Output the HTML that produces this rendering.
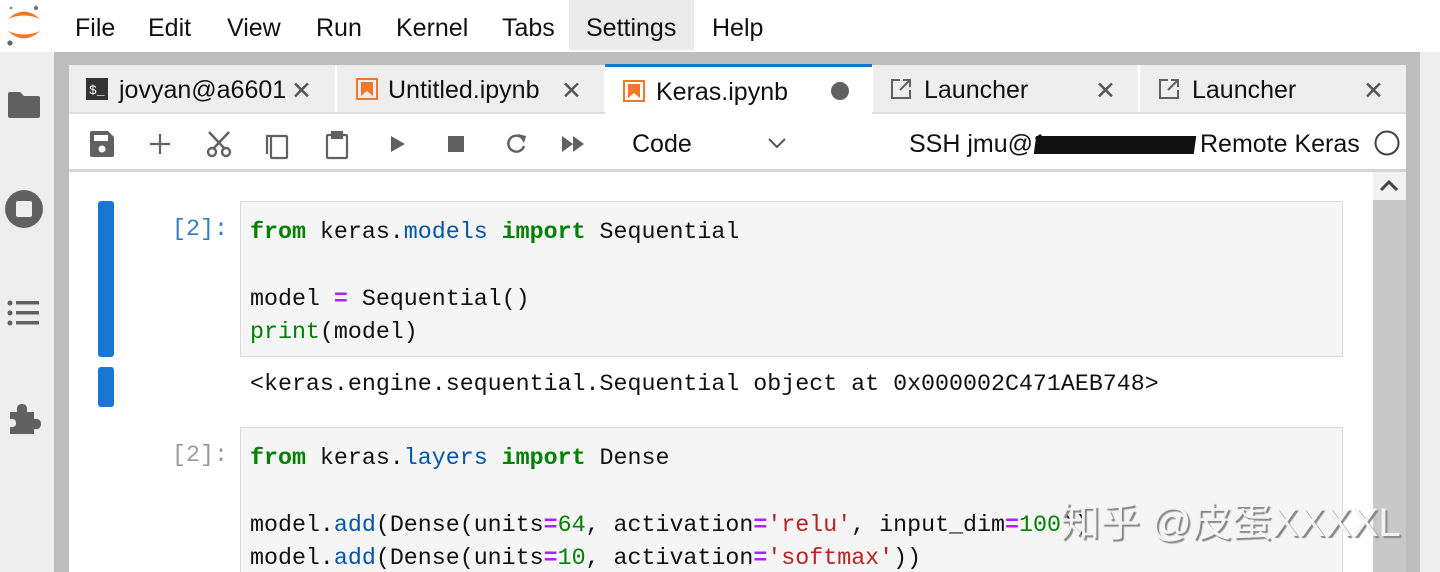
<!DOCTYPE html>
<html style="width:1440px;height:572px;overflow:hidden"><head><meta charset="utf-8"><style>
*{margin:0;padding:0;box-sizing:border-box}
body{width:1440px;height:572px;overflow:hidden;background:#bdbdbd;font-family:"Liberation Sans","Noto Sans CJK SC",sans-serif;position:relative}
.a{position:absolute}
.menu{left:0;top:0;width:1440px;height:52px;background:#fff}
.mi{top:14px;font-size:25px;color:#111}
.tab{top:65px;height:47px;background:#eee;font-size:25px;color:#111}
.tab span{position:absolute;top:11px}
.mono{font-family:"Liberation Mono","DejaVu Sans Mono",monospace;font-size:23.3px;white-space:pre;color:#111}
.k{color:#008000;font-weight:bold}.b{color:#0055aa}.p{color:#aa22ff;font-weight:bold}.g{color:#008000}.s{color:#ba2121}.n{color:#008000}
.ico{fill:#616161}
</style></head><body>
<div class="a menu"></div>
<div class="a" style="left:569px;top:0;width:125px;height:50px;background:#ebebeb"></div>
<svg class="a" style="left:4px;top:2px" width="40" height="46" viewBox="0 0 40 46">
<path d="M4 17 Q20 2 36 17 Q20 10 4 17Z" fill="#f37726"/>
<path d="M4 29 Q20 44 36 29 Q20 36 4 29Z" fill="#f37726"/>
<circle cx="32" cy="6" r="2.2" fill="#777"/><circle cx="6" cy="41" r="2.6" fill="#666"/><circle cx="7" cy="6" r="1.4" fill="#888"/>
</svg>
<div class="a mi" style="left:75px">File</div>
<div class="a mi" style="left:148px">Edit</div>
<div class="a mi" style="left:227px">View</div>
<div class="a mi" style="left:316px">Run</div>
<div class="a mi" style="left:396px">Kernel</div>
<div class="a mi" style="left:502px">Tabs</div>
<div class="a mi" style="left:586px">Settings</div>
<div class="a mi" style="left:712px">Help</div>

<div class="a" style="left:0;top:52px;width:54px;height:520px;background:#eee"></div>
<div class="a" style="left:1420px;top:52px;width:20px;height:520px;background:#eee"></div>
<svg class="a" style="left:6px;top:90px" width="36" height="30"><path class="ico" d="M2 4 Q2 2 4 2 H14 L18 6 H32 Q34 6 34 8 V26 Q34 28 32 28 H4 Q2 28 2 26Z"/></svg>
<svg class="a" style="left:4px;top:189px" width="40" height="40"><circle cx="20" cy="20" r="19" fill="#616161"/><rect x="12" y="12" width="16" height="16" rx="2" fill="#eee"/></svg>
<svg class="a" style="left:6px;top:298px" width="36" height="30"><g fill="#616161"><circle cx="4" cy="5" r="2.5"/><circle cx="4" cy="15" r="2.5"/><circle cx="4" cy="25" r="2.5"/><rect x="10" y="3" width="23" height="3.5"/><rect x="10" y="13" width="23" height="3.5"/><rect x="10" y="23" width="23" height="3.5"/></g></svg>
<svg class="a" style="left:6px;top:400px" width="36" height="36"><path class="ico" d="M4 12 H11 Q10 4 16 4 Q22 4 21 12 H28 V19 Q35 18 35 24 Q35 30 28 29 V34 H4 V27 Q10 28 10 23 Q10 18 4 19Z"/></svg>

<div class="a" style="left:69px;top:65px;width:1337px;height:507px;background:#fff"></div>
<div class="a tab" style="left:69px;width:266px"><svg class="a" style="left:17px;top:13px" width="22" height="22"><rect width="22" height="22" fill="#333"/><text x="3" y="16" font-size="13" fill="#fff" font-family="Liberation Mono">$_</text></svg><span style="left:50px">jovyan@a6601</span><span style="left:222px;color:#555">✕</span></div>
<div class="a tab" style="left:337px;width:267px"><svg class="a" style="left:19px;top:13px" width="22" height="22"><rect x="1" y="1" width="20" height="20" fill="none" stroke="#f37726" stroke-width="2"/><path d="M5 4 H17 V18 L11 13 L5 18Z" fill="#f37726"/></svg><span style="left:51px">Untitled.ipynb</span><span style="left:224px;color:#555">✕</span></div>
<div class="a tab" style="left:605px;width:267px;background:#fff;border-top:3px solid #1976d2;top:64px;height:50px"><svg class="a" style="left:18px;top:13px" width="22" height="22"><rect x="1" y="1" width="20" height="20" fill="none" stroke="#f37726" stroke-width="2"/><path d="M5 4 H17 V18 L11 13 L5 18Z" fill="#f37726"/></svg><span style="left:51px">Keras.ipynb</span><svg class="a" style="left:225px;top:14px" width="20" height="20"><circle cx="10" cy="10" r="9" fill="#616161"/></svg></div>
<div class="a tab" style="left:873px;width:265px"><svg class="a" style="left:17px;top:13px" width="22" height="22"><path d="M10 2 H2 V20 H20 V12 M13 2 H20 V9 M20 2 L10 12" fill="none" stroke="#616161" stroke-width="2"/></svg><span style="left:51px">Launcher</span><span style="left:222px;color:#555">✕</span></div>
<div class="a tab" style="left:1140px;width:266px"><svg class="a" style="left:18px;top:13px" width="22" height="22"><path d="M10 2 H2 V20 H20 V12 M13 2 H20 V9 M20 2 L10 12" fill="none" stroke="#616161" stroke-width="2"/></svg><span style="left:52px">Launcher</span><span style="left:223px;color:#555">✕</span></div>
<div class="a" style="left:69px;top:112px;width:536px;height:2px;background:#ddd"></div>
<div class="a" style="left:872px;top:112px;width:534px;height:2px;background:#ddd"></div>

<!-- toolbar -->
<div class="a" style="left:69px;top:169px;width:1337px;height:3px;background:#d5d5d5"></div>
<svg class="a" style="left:88px;top:130px" width="510" height="30" fill="#616161">
<path d="M2 3 Q2 1 4 1 H20 L26 7 V25 Q26 27 24 27 H4 Q2 27 2 25Z"/><rect x="6" y="5" width="14" height="6" fill="#fff"/><circle cx="14" cy="19" r="3.5" fill="#fff"/>
<path d="M72 4 V24 M62 14 H82" stroke="#616161" stroke-width="2.2"/>
<g stroke="#616161" stroke-width="2.4" fill="none"><circle cx="124" cy="22" r="4"/><circle cx="138" cy="22" r="4"/><path d="M121 2 L137 19 M141 2 L125 19"/></g>
<g stroke="#616161" stroke-width="2.2" fill="none"><path d="M183 6 H179 V24"/><rect x="183" y="6" width="16" height="22" rx="1"/></g>
<g stroke="#616161" stroke-width="2.2" fill="none"><rect x="239" y="5" width="20" height="23" rx="1"/><rect x="244" y="2" width="10" height="6" fill="#616161"/></g>
<path d="M303 6 L317 14 L303 22Z"/>
<rect x="360" y="6" width="16" height="16"/>
<path d="M434 8 A8 8 0 1 0 436 16" fill="none" stroke="#616161" stroke-width="2.4"/><path d="M430 4 L438 6 L436 13Z"/>
<path d="M474 6 L485 14 L474 22Z M485 6 L496 14 L485 22Z"/>
</svg>
<div class="a" style="left:632px;top:130px;font-size:25px;color:#111">Code</div>
<svg class="a" style="left:767px;top:136px" width="20" height="14"><path d="M2 3 L10 11 L18 3" fill="none" stroke="#555" stroke-width="2"/></svg>
<div class="a" style="left:909px;top:130px;font-size:25px;color:#111;white-space:nowrap">SSH jmu@1</div>
<div class="a" style="left:1035px;top:136px;width:160px;height:18px;background:#111;transform:skewX(-8deg)"></div>
<div class="a" style="left:1200px;top:130px;font-size:25px;color:#111">Remote Keras</div>
<svg class="a" style="left:1373px;top:129px" width="28" height="28"><circle cx="14" cy="14" r="11.5" fill="none" stroke="#444" stroke-width="2"/></svg>

<!-- scrollbar -->
<div class="a" style="left:1373px;top:172px;width:33px;height:28px;background:#f2f2f2"></div>
<svg class="a" style="left:1379px;top:179px" width="20" height="14"><path d="M2 11 L10 3 L18 11" fill="none" stroke="#444" stroke-width="3"/></svg>
<div class="a" style="left:1373px;top:200px;width:33px;height:372px;background:#c8c8c8"></div>

<!-- cell 1 -->
<div class="a" style="left:98px;top:201px;width:16px;height:156px;background:#1976d2;border-radius:3px"></div>
<div class="a" style="left:98px;top:367px;width:16px;height:40px;background:#1976d2;border-radius:3px"></div>
<div class="a mono" style="left:172px;top:216px;color:#307fc1">[2]:</div>
<div class="a" style="left:240px;top:201px;width:1103px;height:156px;background:#f5f5f5;border:1px solid #dcdcdc"></div>
<div class="a mono" style="left:250px;top:216px;line-height:33.3px"><span class="k">from</span> keras.<span class="b">models</span> <span class="k">import</span> Sequential

model <span class="p">=</span> Sequential()
<span class="g">print</span>(model)</div>
<div class="a mono" style="left:250px;top:371px">&lt;keras.engine.sequential.Sequential object at 0x000002C471AEB748&gt;</div>

<!-- cell 2 -->
<div class="a mono" style="left:172px;top:442px;color:#999">[2]:</div>
<div class="a" style="left:240px;top:427px;width:1103px;height:145px;background:#f5f5f5;border:1px solid #dcdcdc;border-bottom:none"></div>
<div class="a mono" style="left:250px;top:442px;line-height:33.3px;height:130px;overflow:hidden"><span class="k">from</span> keras.<span class="b">layers</span> <span class="k">import</span> Dense

model.<span class="b">add</span>(Dense(units<span class="p">=</span><span class="n">64</span>, activation<span class="p">=</span><span class="s">'relu'</span>, input_dim<span class="p">=</span><span class="n">100</span>))
model.<span class="b">add</span>(Dense(units<span class="p">=</span><span class="n">10</span>, activation<span class="p">=</span><span class="s">'softmax'</span>))</div>

<div class="a" style="left:1060px;top:490px;font-size:40px;color:#f4f4f4;text-shadow:2px 2px 1px #888;white-space:nowrap;font-family:'Liberation Sans','Noto Sans CJK SC',sans-serif">知乎 @皮蛋XXXXL</div>
</body></html>
